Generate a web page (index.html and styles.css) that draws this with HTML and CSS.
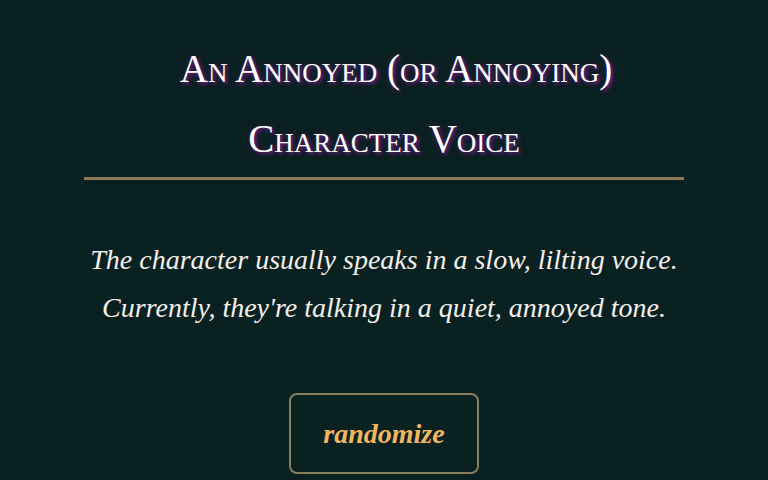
FILE: index.html
```html
<!DOCTYPE html>
<html>
<head>
    <meta charset="UTF-8">
    <meta name="viewport" content="width=device-width, initial-scale=1.0">
    <title>Character Voice</title>
    <link rel="stylesheet" href="styles.css">
</head>
<body>
    <div class="page">
        <h1 class="title">An Annoyed (or Annoying)<br>Character Voice</h1>
        <hr class="rule">
        <p class="voice" id="voice">The character usually speaks in a slow, lilting voice.<br>Currently, they're talking in a quiet, annoyed tone.</p>
        <button class="randomize" id="randomize">randomize</button>
    </div>
</body>
</html>
```

FILE: styles.css
```css
* {
    box-sizing: border-box;
}

body {
    margin: 0;
    background: #0a2121;
    color: #f4f0ec;
    font-family: "Liberation Serif", serif;
}

.page {
    width: 600px;
    margin: 0 auto;
    display: flex;
    flex-direction: column;
    align-items: center;
}

.title {
    margin: 34px 0 0;
    font-size: 39px;
    font-weight: normal;
    font-variant: small-caps;
    line-height: 70px;
    text-align: center;
    text-indent: 24px;
    color: #fff;
    text-shadow: 2px 2px 3px #62207a, 1px 1px 6px #4e1660;
}

.rule {
    width: 100%;
    margin: 3px 0 0;
    border: none;
    height: 3px;
    background: #8a7c58;
}

.voice {
    margin: 56px 0 0;
    font-size: 28px;
    font-style: italic;
    line-height: 48px;
    text-align: center;
}

.randomize {
    margin-top: 61px;
    width: 190px;
    height: 81px;
    background: transparent;
    border: 2px solid #8a7f5c;
    border-radius: 8px;
    color: #f2b75e;
    font-family: "Liberation Serif", serif;
    font-size: 28px;
    font-weight: bold;
    font-style: italic;
    cursor: pointer;
}
```
